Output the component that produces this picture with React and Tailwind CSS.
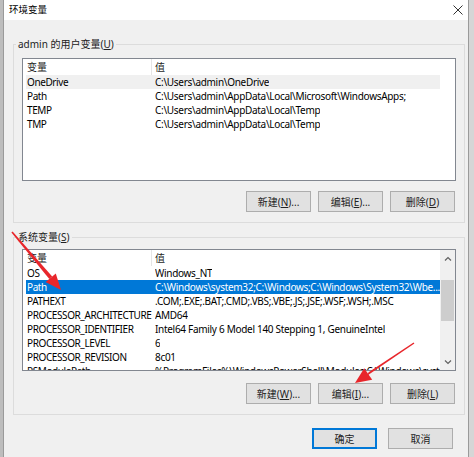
const userVars = [
  ["OneDrive", "C:\\Users\\admin\\OneDrive"],
  ["Path", "C:\\Users\\admin\\AppData\\Local\\Microsoft\\WindowsApps;"],
  ["TEMP", "C:\\Users\\admin\\AppData\\Local\\Temp"],
  ["TMP", "C:\\Users\\admin\\AppData\\Local\\Temp"],
];

const systemVars = [
  ["OS", "Windows_NT"],
  ["Path", "C:\\Windows\\system32;C:\\Windows;C:\\Windows\\System32\\Wbe..."],
  ["PATHEXT", ".COM;.EXE;.BAT;.CMD;.VBS;.VBE;.JS;.JSE;.WSF;.WSH;.MSC"],
  ["PROCESSOR_ARCHITECTURE", "AMD64"],
  ["PROCESSOR_IDENTIFIER", "Intel64 Family 6 Model 140 Stepping 1, GenuineIntel"],
  ["PROCESSOR_LEVEL", "6"],
  ["PROCESSOR_REVISION", "8c01"],
  ["PSModulePath", "%ProgramFiles%\\WindowsPowerShell\\Modules;C:\\Windows\\system32\\..."],
];

function Chevron({ up }) {
  return (
    <svg width="8" height="5" viewBox="0 0 8 5" fill="none" stroke="#606060" strokeWidth="1.2">
      <path d={up ? "M1 4.5 4 1.5 7 4.5" : "M1 0.5 4 3.5 7 0.5"} />
    </svg>
  );
}

function ListView({ rows, selected, hovered, scroll, className }) {
  return (
    <div className={`flex border border-[#828790] bg-white overflow-hidden ${className}`}>
      <div className="w-[417px] pl-[3px] shrink-0">
        <div className="flex h-[16px] items-center text-[#1e1e1e]">
          <div className="w-[126px] h-full pl-[1px] flex items-center border-r border-[#e5e5e5]">变量</div>
          <div className="pl-[3px]">值</div>
        </div>
        {rows.map(([name, value], i) => (
          <div
            key={name}
            className={`flex h-[14px] w-[414px] items-center whitespace-nowrap tracking-[-0.3px]
              ${i === selected ? "bg-[#0078d7] text-white" : i === hovered ? "bg-[#f0f0f0]" : ""}`}
          >
            <div className="w-[129px] pl-[1px] shrink-0 tracking-[-0.4px]">{name}</div>
            <div className="overflow-hidden">{value}</div>
          </div>
        ))}
      </div>
      {scroll && (
        <div className="flex-1 flex flex-col bg-[#f0f0f0]">
          <div className="h-[16px] flex items-center justify-center"><Chevron up /></div>
          <div className="mt-[14px] h-[41px] mx-[1px] bg-[#cdcdcd]" />
          <div className="flex-1" />
          <div className="h-[16px] flex items-center justify-center"><Chevron /></div>
        </div>
      )}
    </div>
  );
}

function Btn({ children, primary }) {
  return (
    <button
      className={`w-[65px] h-[21px] bg-[#e1e1e1] border text-[10px] leading-none flex items-center justify-center text-[#222]
        ${primary ? "border-[#0078d7] shadow-[inset_0_0_0_1px_#0078d7]" : "border-[#adadad]"}`}
    >
      {children}
    </button>
  );
}

function Group({ label, children, className }) {
  return (
    <fieldset className={`ml-[9px] w-[452px] border border-[#dcdcdc] px-[8px] pb-[10px] ${className}`}>
      <legend className="-ml-[6px] px-[2px] h-[16px] leading-[16px] text-[#222]">{label}</legend>
      {children}
    </fieldset>
  );
}

export default function App() {
  return (
    <div
      className="relative flex w-[474px] h-[457px] overflow-hidden bg-[#cfcfcf] text-[10px] text-black"
      style={{ fontFamily: '"Noto Sans", "Noto Sans CJK SC", sans-serif' }}
    >
      <div className="w-[3px] bg-[#bdbdbd]" />
      <div className="w-[466px] bg-[#f0f0f0] border-x border-[#9a9a9a] flex flex-col">
        <div className="h-[20px] bg-white flex items-center justify-between pl-[5px] pr-[5px]">
          <span className="text-[9.5px]">环境变量</span>
          <svg width="10" height="10" viewBox="0 0 10 10" stroke="#333" strokeWidth="1">
            <path d="M0.5 0.5 9.5 9.5M9.5 0.5 0.5 9.5" />
          </svg>
        </div>

        <Group label={<>admin 的用户变量(<u>U</u>)</>} className="mt-[16px]">
          <ListView rows={userVars} hovered={0} className="mt-[6px] h-[123px]" />
          <div className="flex justify-end gap-[7px] mt-[10px] pr-[1px]">
            <Btn>新建(<u>N</u>)...</Btn>
            <Btn>编辑(<u>E</u>)...</Btn>
            <Btn>删除(<u>D</u>)</Btn>
          </div>
        </Group>

        <Group label={<>系统变量(<u>S</u>)</>} className="mt-[6px]">
          <ListView rows={systemVars} selected={1} scroll className="mt-[4px] h-[122px]" />
          <div className="flex justify-end gap-[7px] mt-[12px] pr-[1px]">
            <Btn>新建(<u>W</u>)...</Btn>
            <Btn>编辑(<u>I</u>)...</Btn>
            <Btn>删除(<u>L</u>)</Btn>
          </div>
        </Group>

        <div className="flex justify-end gap-[11px] mt-[13px] pr-[15px]">
          <Btn primary>确定</Btn>
          <Btn>取消</Btn>
        </div>
      </div>
      <div className="w-[5px] bg-[#d6d6d6]" />

      {/* red annotation arrows */}
      <svg className="absolute inset-0 pointer-events-none" width="474" height="457">
        <polygon fill="#e8262b" points="11.4,232.4 12.6,231.6 52.2,276.5 49.3,279.1" />
        <polygon fill="#e8262b" points="61,290 45.6,282.1 55.8,273.5" />
        <polygon fill="#e8262b" points="414.4,343.5 413.6,342.5 368.6,372.3 367.0,375.7" />
        <polygon fill="#e8262b" points="355,383 372.2,379.8 364.2,368.2" />
      </svg>
    </div>
  );
}
